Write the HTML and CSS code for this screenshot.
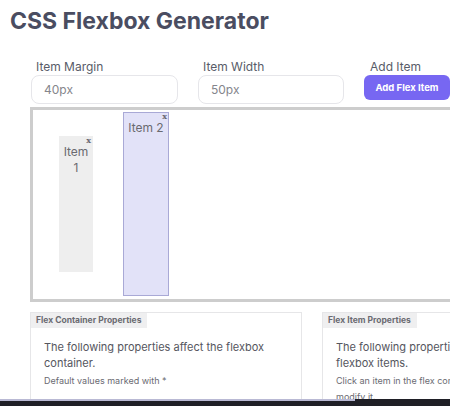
FILE: index.html
```html
<!DOCTYPE html>
<html>
<head>
<meta charset="utf-8">
<link rel="stylesheet" href="styles.css">
</head>
<body>
<div class="page">
  <h1 class="title">CSS Flexbox Generator</h1>
  <div class="controls">
    <div class="field field-margin">
      <label class="label">Item Margin</label>
      <div class="input">40px</div>
    </div>
    <div class="field field-width">
      <label class="label">Item Width</label>
      <div class="input">50px</div>
    </div>
    <div class="field field-add">
      <label class="label">Add Item</label>
      <button class="btn">Add Flex Item</button>
    </div>
  </div>
  <div class="flexbox">
    <div class="item item-1"><span class="close">x</span><span class="item-text">Item 1</span></div>
    <div class="item item-2"><span class="close">x</span><span class="item-text">Item 2</span></div>
  </div>
  <div class="cards">
    <div class="card card-1">
      <div class="tab">Flex Container Properties</div>
      <p class="lead">The following properties affect the flexbox container.</p>
      <p class="note">Default values marked with *</p>
    </div>
    <div class="card card-2">
      <div class="tab">Flex Item Properties</div>
      <p class="lead">The following properties affect the flexbox items.</p>
      <p class="note note-narrow">Click an item in the flex container to modify it.</p>
    </div>
  </div>
</div>
<div class="scrollbar"><div class="thumb"></div></div>
</body>
</html>
```

FILE: styles.css
```css
html, body {
  margin: 0;
  padding: 0;
  overflow: hidden;
  background: #ffffff;
  font-family: Inter, "Noto Sans", sans-serif;
}
.page {
  width: 600px;
  padding-left: 31px;
}
.title {
  margin: 7px 0 0 -21px;
  font-size: 23px;
  line-height: 28px;
  font-weight: 700;
  color: #4a4d61;
  letter-spacing: 0;
}
.controls {
  display: flex;
  margin-top: 25px;
  gap: 20px;
}
.field {
  display: flex;
  flex-direction: column;
}
.field-margin { width: 147px; }
.field-width { width: 146px; }
.field-add { width: 90px; }
.label {
  font-size: 12px;
  line-height: 14px;
  color: #585c68;
  padding-left: 5px;
  margin-bottom: 1px;
}
.field-add .label { padding-left: 6px; }
.input {
  box-sizing: border-box;
  height: 29px;
  border: 1px solid #e6e6ea;
  border-radius: 8px;
  font-size: 12px;
  line-height: 27px;
  color: #85858c;
  padding-left: 12px;
}
.btn {
  box-sizing: border-box;
  width: 86px;
  height: 25px;
  border: none;
  border-radius: 6px;
  background: #7767f2;
  color: #ffffff;
  font-family: Inter, "Noto Sans", sans-serif;
  font-weight: 700;
  font-size: 9.5px;
  padding: 0;
  text-align: center;
}
.flexbox {
  display: flex;
  margin-top: 3px;
  width: 540px;
  height: 189px;
  border: 3px solid #cdcdcd;
  border-right: none;
  box-sizing: content-box;
  margin-left: -1px;
}
.item {
  position: relative;
  box-sizing: border-box;
  text-align: center;
  font-size: 12px;
  line-height: 16px;
  color: #6a6a70;
  padding-top: 8px;
}
.item-1 {
  width: 34px;
  margin: 26px 0 27px 26px;
  background: #eeeeee;
  padding-left: 2px;
  padding-right: 2px;
}
.item-2 {
  width: 46px;
  margin: 2px 0 3px 30px;
  background: #e2e2f8;
  border: 1px solid #a9a9d6;
  padding-top: 7px;
}
.close {
  position: absolute;
  top: 0;
  right: 2px;
  font-family: "DejaVu Serif", "Liberation Serif", serif;
  font-weight: 700;
  font-size: 8px;
  line-height: 8px;
  color: #666670;
}
.item-2 .close { right: 1px; top: -1px; }
.cards {
  display: flex;
  gap: 20px;
  margin-top: 10px;
}
.card {
  box-sizing: border-box;
  border: 1px solid #e6e6e8;
  height: 120px;
  padding: 0;
}
.card-1 { width: 272px; margin-left: -1px; }
.card-2 { width: 212px; }
.tab {
  display: inline-block;
  background: #efeff0;
  font-size: 8.5px;
  font-weight: 700;
  color: #6b6b72;
  line-height: 15px;
  padding: 0 6px 0 5px;
  vertical-align: top;
}
.lead {
  margin: 6px 13px 0 13px;
  font-size: 11px;
  line-height: 16px;
  color: #55565e;
}
.note {
  margin: 2px 13px 0 13px;
  font-size: 9px;
  line-height: 16px;
  color: #6b6b72;
}
.note-narrow { margin-right: 28px; }
.scrollbar {
  position: fixed;
  left: 0;
  right: 0;
  bottom: 0;
  height: 7px;
  background: #1f1f26;
}
.thumb {
  width: 355px;
  height: 2px;
  background: #b9b9d4;
}
```
